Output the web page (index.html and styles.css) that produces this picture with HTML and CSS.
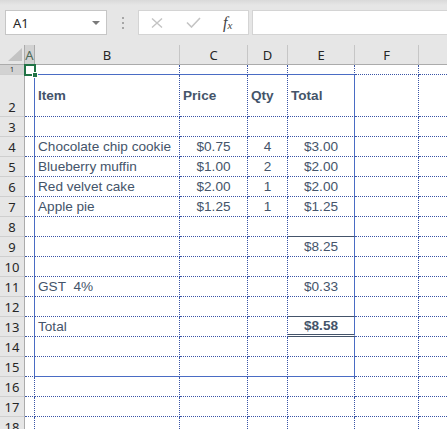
FILE: index.html
```html
<!DOCTYPE html>
<html lang="en">
  <head>
    <meta charset="UTF-8" />
    <title>Book1 - Excel</title>
    <link rel="stylesheet" href="styles.css">
  </head>
  <body>
    <div class="toolbar">
      <div class="namebox">
        <span>A1</span>
        <svg width="8" height="4" viewBox="0 0 8 4"><path d="M0 0 L8 0 L4 4 Z" fill="#7a7a7a"/></svg>
      </div>
      <div class="grip"><i></i><i></i><i></i></div>
      <div class="fxbox">
        <svg class="ico-x" width="12" height="10" viewBox="0 0 12 10"><path d="M1 0.5 L11 9.5 M11 0.5 L1 9.5" stroke="#c4c4c4" stroke-width="1.4" fill="none"/></svg>
        <svg class="ico-ok" width="15" height="11" viewBox="0 0 15 11"><path d="M1 5.5 L5.5 10 L14 1" stroke="#c4c4c4" stroke-width="1.6" fill="none"/></svg>
        <span class="fx">f<sub>x</sub></span>
      </div>
      <div class="formula"></div>
    </div>

    <div class="sheet">
      <!-- column headers -->
      <div class="corner"><span class="tri"></span></div>
      <div class="hd on">A</div>
      <div class="hd">B</div>
      <div class="hd">C</div>
      <div class="hd">D</div>
      <div class="hd">E</div>
      <div class="hd">F</div>
      <div class="hd"></div>

      <!-- row 1 -->
      <div class="rh on small">1</div>
      <div class="c a1"><span class="sel"></span><span class="handle"></span></div>
      <div class="c edge-b"></div><div class="c edge-b"></div><div class="c edge-b"></div><div class="c edge-b"></div>
      <div class="c"></div><div class="c"></div>

      <!-- row 2 -->
      <div class="rh">2</div>
      <div class="c edge-r"></div>
      <div class="c b">Item</div>
      <div class="c b">Price</div>
      <div class="c b">Qty</div>
      <div class="c b edge-r">Total</div>
      <div class="c"></div><div class="c"></div>

      <div class="rh">3</div>
      <div class="c edge-r"></div><div class="c"></div><div class="c"></div><div class="c"></div><div class="c edge-r"></div>
      <div class="c"></div><div class="c"></div>

      <div class="rh">4</div>
      <div class="c edge-r"></div>
      <div class="c">Chocolate chip cookie</div>
      <div class="c num">$0.75</div>
      <div class="c num">4</div>
      <div class="c num edge-r">$3.00</div>
      <div class="c"></div><div class="c"></div>

      <div class="rh">5</div>
      <div class="c edge-r"></div>
      <div class="c">Blueberry muffin</div>
      <div class="c num">$1.00</div>
      <div class="c num">2</div>
      <div class="c num edge-r">$2.00</div>
      <div class="c"></div><div class="c"></div>

      <div class="rh">6</div>
      <div class="c edge-r"></div>
      <div class="c">Red velvet cake</div>
      <div class="c num">$2.00</div>
      <div class="c num">1</div>
      <div class="c num edge-r">$2.00</div>
      <div class="c"></div><div class="c"></div>

      <div class="rh">7</div>
      <div class="c edge-r"></div>
      <div class="c">Apple pie</div>
      <div class="c num">$1.25</div>
      <div class="c num">1</div>
      <div class="c num edge-r">$1.25</div>
      <div class="c"></div><div class="c"></div>

      <div class="rh">8</div>
      <div class="c edge-r"></div><div class="c"></div><div class="c"></div><div class="c"></div>
      <div class="c edge-r rule-b"></div>
      <div class="c"></div><div class="c"></div>

      <div class="rh">9</div>
      <div class="c edge-r"></div><div class="c"></div><div class="c"></div><div class="c"></div>
      <div class="c num edge-r">$8.25</div>
      <div class="c"></div><div class="c"></div>

      <div class="rh">10</div>
      <div class="c edge-r"></div><div class="c"></div><div class="c"></div><div class="c"></div><div class="c edge-r"></div>
      <div class="c"></div><div class="c"></div>

      <div class="rh">11</div>
      <div class="c edge-r"></div>
      <div class="c">GST&nbsp; 4%</div>
      <div class="c"></div><div class="c"></div>
      <div class="c num edge-r">$0.33</div>
      <div class="c"></div><div class="c"></div>

      <div class="rh">12</div>
      <div class="c edge-r"></div><div class="c"></div><div class="c"></div><div class="c"></div>
      <div class="c edge-r rule-b"></div>
      <div class="c"></div><div class="c"></div>

      <div class="rh">13</div>
      <div class="c edge-r"></div>
      <div class="c">Total</div>
      <div class="c"></div><div class="c"></div>
      <div class="c num b edge-r dbl-b">$8.58</div>
      <div class="c"></div><div class="c"></div>

      <div class="rh">14</div>
      <div class="c edge-r"></div><div class="c"></div><div class="c"></div><div class="c"></div><div class="c edge-r"></div>
      <div class="c"></div><div class="c"></div>

      <div class="rh">15</div>
      <div class="c edge-r"></div>
      <div class="c edge-b"></div><div class="c edge-b"></div><div class="c edge-b"></div><div class="c edge-b edge-r"></div>
      <div class="c"></div><div class="c"></div>

      <div class="rh">16</div>
      <div class="c"></div><div class="c"></div><div class="c"></div><div class="c"></div><div class="c"></div><div class="c"></div><div class="c"></div>

      <div class="rh">17</div>
      <div class="c"></div><div class="c"></div><div class="c"></div><div class="c"></div><div class="c"></div><div class="c"></div><div class="c"></div>

      <div class="rh">18</div>
      <div class="c"></div><div class="c"></div><div class="c"></div><div class="c"></div><div class="c"></div><div class="c"></div><div class="c"></div>
    </div>
  </body>
</html>
```

FILE: styles.css
```css
* {
  margin: 0;
  padding: 0;
  box-sizing: border-box;
}

body {
  font-family: "Liberation Sans", Arial, sans-serif;
  background-color: #fff;
  width: 447px;
  height: 429px;
  overflow: hidden;
}

/* formula bar */
.toolbar {
  height: 45px;
  display: flex;
  align-items: flex-start;
  padding: 10px 0 0 5px;
  background: linear-gradient(#d9d9d9, #e6e6e6 5px);
}

.namebox {
  width: 102px;
  height: 25px;
  background: #fff;
  border: 1px solid #c6c6c6;
  display: flex;
  align-items: center;
  justify-content: space-between;
  padding: 0 6px 0 7px;
  font-family: "Noto Sans", sans-serif;
  font-size: 13px;
  color: #262626;
}

.grip {
  width: 31px;
  height: 25px;
  display: flex;
  flex-direction: column;
  align-items: center;
  justify-content: center;
  gap: 3px;
}

.grip i {
  width: 2px;
  height: 2px;
  background: #a6a6a6;
}

.fxbox {
  width: 111px;
  height: 25px;
  background: #fff;
  border: 1px solid #d4d4d4;
  display: flex;
  align-items: center;
  padding-left: 12px;
}

.ico-ok {
  margin-left: 23px;
}

.fx {
  margin-left: 22px;
  font-family: "Liberation Serif", serif;
  font-style: italic;
  font-size: 16px;
  color: #444;
}

.fx sub {
  font-size: 11px;
  vertical-align: -1px;
}

.formula {
  flex: 1;
  height: 25px;
  margin-left: 3px;
  background: #fff;
  border: 1px solid #d4d4d4;
  border-right: none;
}

/* grid */
.sheet {
  display: grid;
  grid-template-columns: 25px 10px 145px 68px 40px 67px 64px 64px;
  grid-template-rows: 20px 10px 42px repeat(16, 20px);
  width: 483px;
}

.corner {
  background: #e6e6e6;
  border-right: 1px solid #ababab;
  border-bottom: 1px solid #ababab;
  position: relative;
}

.tri {
  position: absolute;
  left: 8px;
  top: 3px;
  width: 0;
  height: 0;
  border-left: 14px solid transparent;
  border-bottom: 13px solid #c3c3c3;
}

.hd {
  background: #e6e6e6;
  border-right: 1px solid #c6c6c6;
  border-bottom: 1px solid #ababab;
  display: flex;
  align-items: center;
  justify-content: center;
  font-family: "Noto Sans", sans-serif;
  font-size: 13px;
  color: #262626;
}

.hd.on {
  background: #d2d2d2;
  color: #4f6b58;
  border-right-color: #ababab;
}

.rh {
  background: #e6e6e6;
  border-right: 1px solid #ababab;
  border-bottom: 1px solid #cfcfcf;
  display: flex;
  align-items: flex-end;
  justify-content: center;
  font-family: "Noto Sans", sans-serif;
  font-size: 13px;
  line-height: 17px;
  color: #262626;
}

.rh.on {
  background: #d2d2d2;
}

.rh.small {
  font-size: 7px;
  line-height: 9px;
  align-items: center;
}

.c {
  border-right: 1px dotted #3a55a6;
  border-bottom: 1px dotted #3a55a6;
  display: flex;
  align-items: center;
  padding: 0 3px;
  font-size: 13.6px;
  color: #44546a;
  white-space: nowrap;
  overflow: hidden;
}

.c.num {
  justify-content: center;
}

.c.b {
  font-weight: bold;
}

.edge-r {
  border-right: 1px solid #4a6cc4;
}

.edge-b {
  border-bottom: 1px solid #4a6cc4;
}

.rule-b {
  border-bottom: 1px solid #44546a;
}

.dbl-b {
  border-bottom: 3px double #44546a;
}

/* active cell */
.a1 {
  position: relative;
  overflow: visible;
  border-right: 1px solid #4a6cc4;
}

.sel {
  position: absolute;
  left: -1px;
  top: -1px;
  width: 12px;
  height: 12px;
  border: 2px solid #217346;
}

.handle {
  position: absolute;
  left: 7px;
  top: 7px;
  width: 6px;
  height: 6px;
  background: #217346;
  border: 1px solid #fff;
}
```
